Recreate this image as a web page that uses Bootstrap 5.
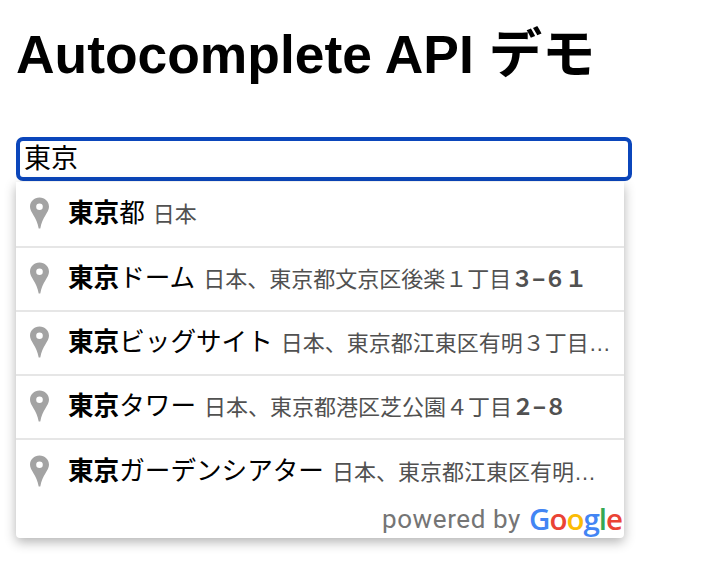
<!DOCTYPE html>
<html lang="ja">

<head>
    <meta charset="UTF-8">
    <meta name="viewport" content="width=device-width, initial-scale=1.0">
    <title>Autocomplete API デモ</title>
    <link href="https://cdn.jsdelivr.net/npm/bootstrap@5.3.1/dist/css/bootstrap.min.css" rel="stylesheet">
    <style>
        body {
            font-family: "Liberation Sans", "Noto Sans CJK JP", sans-serif;
            color: #000;
        }

        .demo-page {
            padding: 24px 0 30px 16px;
            width: 660px;
        }

        .demo-title {
            font-size: 53.4px;
            line-height: 62px;
            font-weight: 700;
            margin: 0 0 51px 0;
            white-space: nowrap;
        }

        .search-box {
            display: block;
            width: 616px;
            height: 44px;
            padding: 0 4px 5px;
            border: 4px solid #0b46bb;
            border-radius: 7px;
            font-size: 27px;
            color: #000;
            outline: none;
        }

        .pac-box {
            width: 608px;
            margin-top: 1px;
            background: #fff;
            border-radius: 0 0 4px 4px;
            box-shadow: 0 4px 12px rgba(0, 0, 0, .3);
        }

        .pac-row {
            height: 64px;
            border-bottom: 2px solid #e6e6e6;
            padding: 0 0 2px 14px;
            gap: 19px;
            white-space: nowrap;
        }

        .pac-row-first {
            height: 66px;
        }

        .pac-row-last {
            border-bottom: 0;
        }

        .pin-icon {
            flex: none;
            width: 19px;
            height: 32px;
        }

        .pac-text {
            font-size: 22px;
            color: #515151;
        }

        .pac-main {
            font-size: 25.6px;
            color: #000;
            margin-right: 8px;
        }

        .pac-num {
            font-weight: 700;
            letter-spacing: -1px;
        }

        .pac-foot {
            height: 34px;
            padding: 0 2px 4px 0;
            font-family: Roboto, "Liberation Sans", sans-serif;
            font-size: 26px;
            letter-spacing: .6px;
            color: #757575;
        }

        .pac-logo {
            font-family: "Open Sans", Roboto, sans-serif;
            font-size: 29.5px;
            font-weight: 600;
            letter-spacing: -1px;
            margin-left: 8px;
            line-height: 1;
        }
    </style>
</head>

<body>

    <div class="demo-page">
        <h1 class="demo-title">Autocomplete API デモ</h1>

        <input type="text" class="search-box" value="東京">

        <!-- Suggestion list -->
        <div class="pac-box">
            <div class="pac-row pac-row-first d-flex align-items-center">
                <svg class="pin-icon" viewBox="0 0 19 31"><path fill="#a3a3a3" fill-rule="evenodd" d="M9.500 0C4.200 0 0 4 0 9.200c0 5.800 6.800 10 8.700 21.800h1.600C12.200 19.200 19 15 19 9.200 19 4 14.800 0 9.500 0zm0 6a3.300 3.300 0 1 1 0 6.600 3.300 3.300 0 0 1 0-6.600z"/></svg>
                <div class="pac-text"><span class="pac-main"><b>東京</b>都</span>日本</div>
            </div>
            <div class="pac-row d-flex align-items-center">
                <svg class="pin-icon" viewBox="0 0 19 31"><path fill="#a3a3a3" fill-rule="evenodd" d="M9.500 0C4.200 0 0 4 0 9.200c0 5.800 6.800 10 8.700 21.800h1.600C12.200 19.200 19 15 19 9.200 19 4 14.800 0 9.500 0zm0 6a3.300 3.300 0 1 1 0 6.600 3.300 3.300 0 0 1 0-6.600z"/></svg>
                <div class="pac-text"><span class="pac-main"><b>東京</b>ドーム</span>日本、東京都文京区後楽１丁目<span class="pac-num">３−６１</span></div>
            </div>
            <div class="pac-row d-flex align-items-center">
                <svg class="pin-icon" viewBox="0 0 19 31"><path fill="#a3a3a3" fill-rule="evenodd" d="M9.500 0C4.200 0 0 4 0 9.200c0 5.800 6.800 10 8.700 21.800h1.600C12.200 19.200 19 15 19 9.200 19 4 14.800 0 9.500 0zm0 6a3.300 3.300 0 1 1 0 6.600 3.300 3.300 0 0 1 0-6.600z"/></svg>
                <div class="pac-text"><span class="pac-main"><b>東京</b>ビッグサイト</span>日本、東京都江東区有明３丁目…</div>
            </div>
            <div class="pac-row d-flex align-items-center">
                <svg class="pin-icon" viewBox="0 0 19 31"><path fill="#a3a3a3" fill-rule="evenodd" d="M9.500 0C4.200 0 0 4 0 9.200c0 5.800 6.800 10 8.700 21.800h1.600C12.200 19.200 19 15 19 9.200 19 4 14.800 0 9.500 0zm0 6a3.300 3.300 0 1 1 0 6.600 3.300 3.300 0 0 1 0-6.600z"/></svg>
                <div class="pac-text"><span class="pac-main"><b>東京</b>タワー</span>日本、東京都港区芝公園４丁目<span class="pac-num">２−８</span></div>
            </div>
            <div class="pac-row pac-row-last d-flex align-items-center">
                <svg class="pin-icon" viewBox="0 0 19 31"><path fill="#a3a3a3" fill-rule="evenodd" d="M9.500 0C4.200 0 0 4 0 9.200c0 5.800 6.800 10 8.700 21.800h1.600C12.200 19.200 19 15 19 9.200 19 4 14.800 0 9.500 0zm0 6a3.300 3.300 0 1 1 0 6.600 3.300 3.300 0 0 1 0-6.600z"/></svg>
                <div class="pac-text"><span class="pac-main"><b>東京</b>ガーデンシアター</span>日本、東京都江東区有明…</div>
            </div>
            <div class="pac-foot d-flex justify-content-end align-items-center">
                powered by
                <span class="pac-logo"><span style="color:#4285f4">G</span><span style="color:#ea4335">o</span><span style="color:#fbbc05">o</span><span style="color:#4285f4">g</span><span style="color:#34a853">l</span><span style="color:#ea4335">e</span></span>
            </div>
        </div>
    </div>

    <script src="https://cdn.jsdelivr.net/npm/bootstrap@5.3.1/dist/js/bootstrap.bundle.min.js"></script>
</body>

</html>
